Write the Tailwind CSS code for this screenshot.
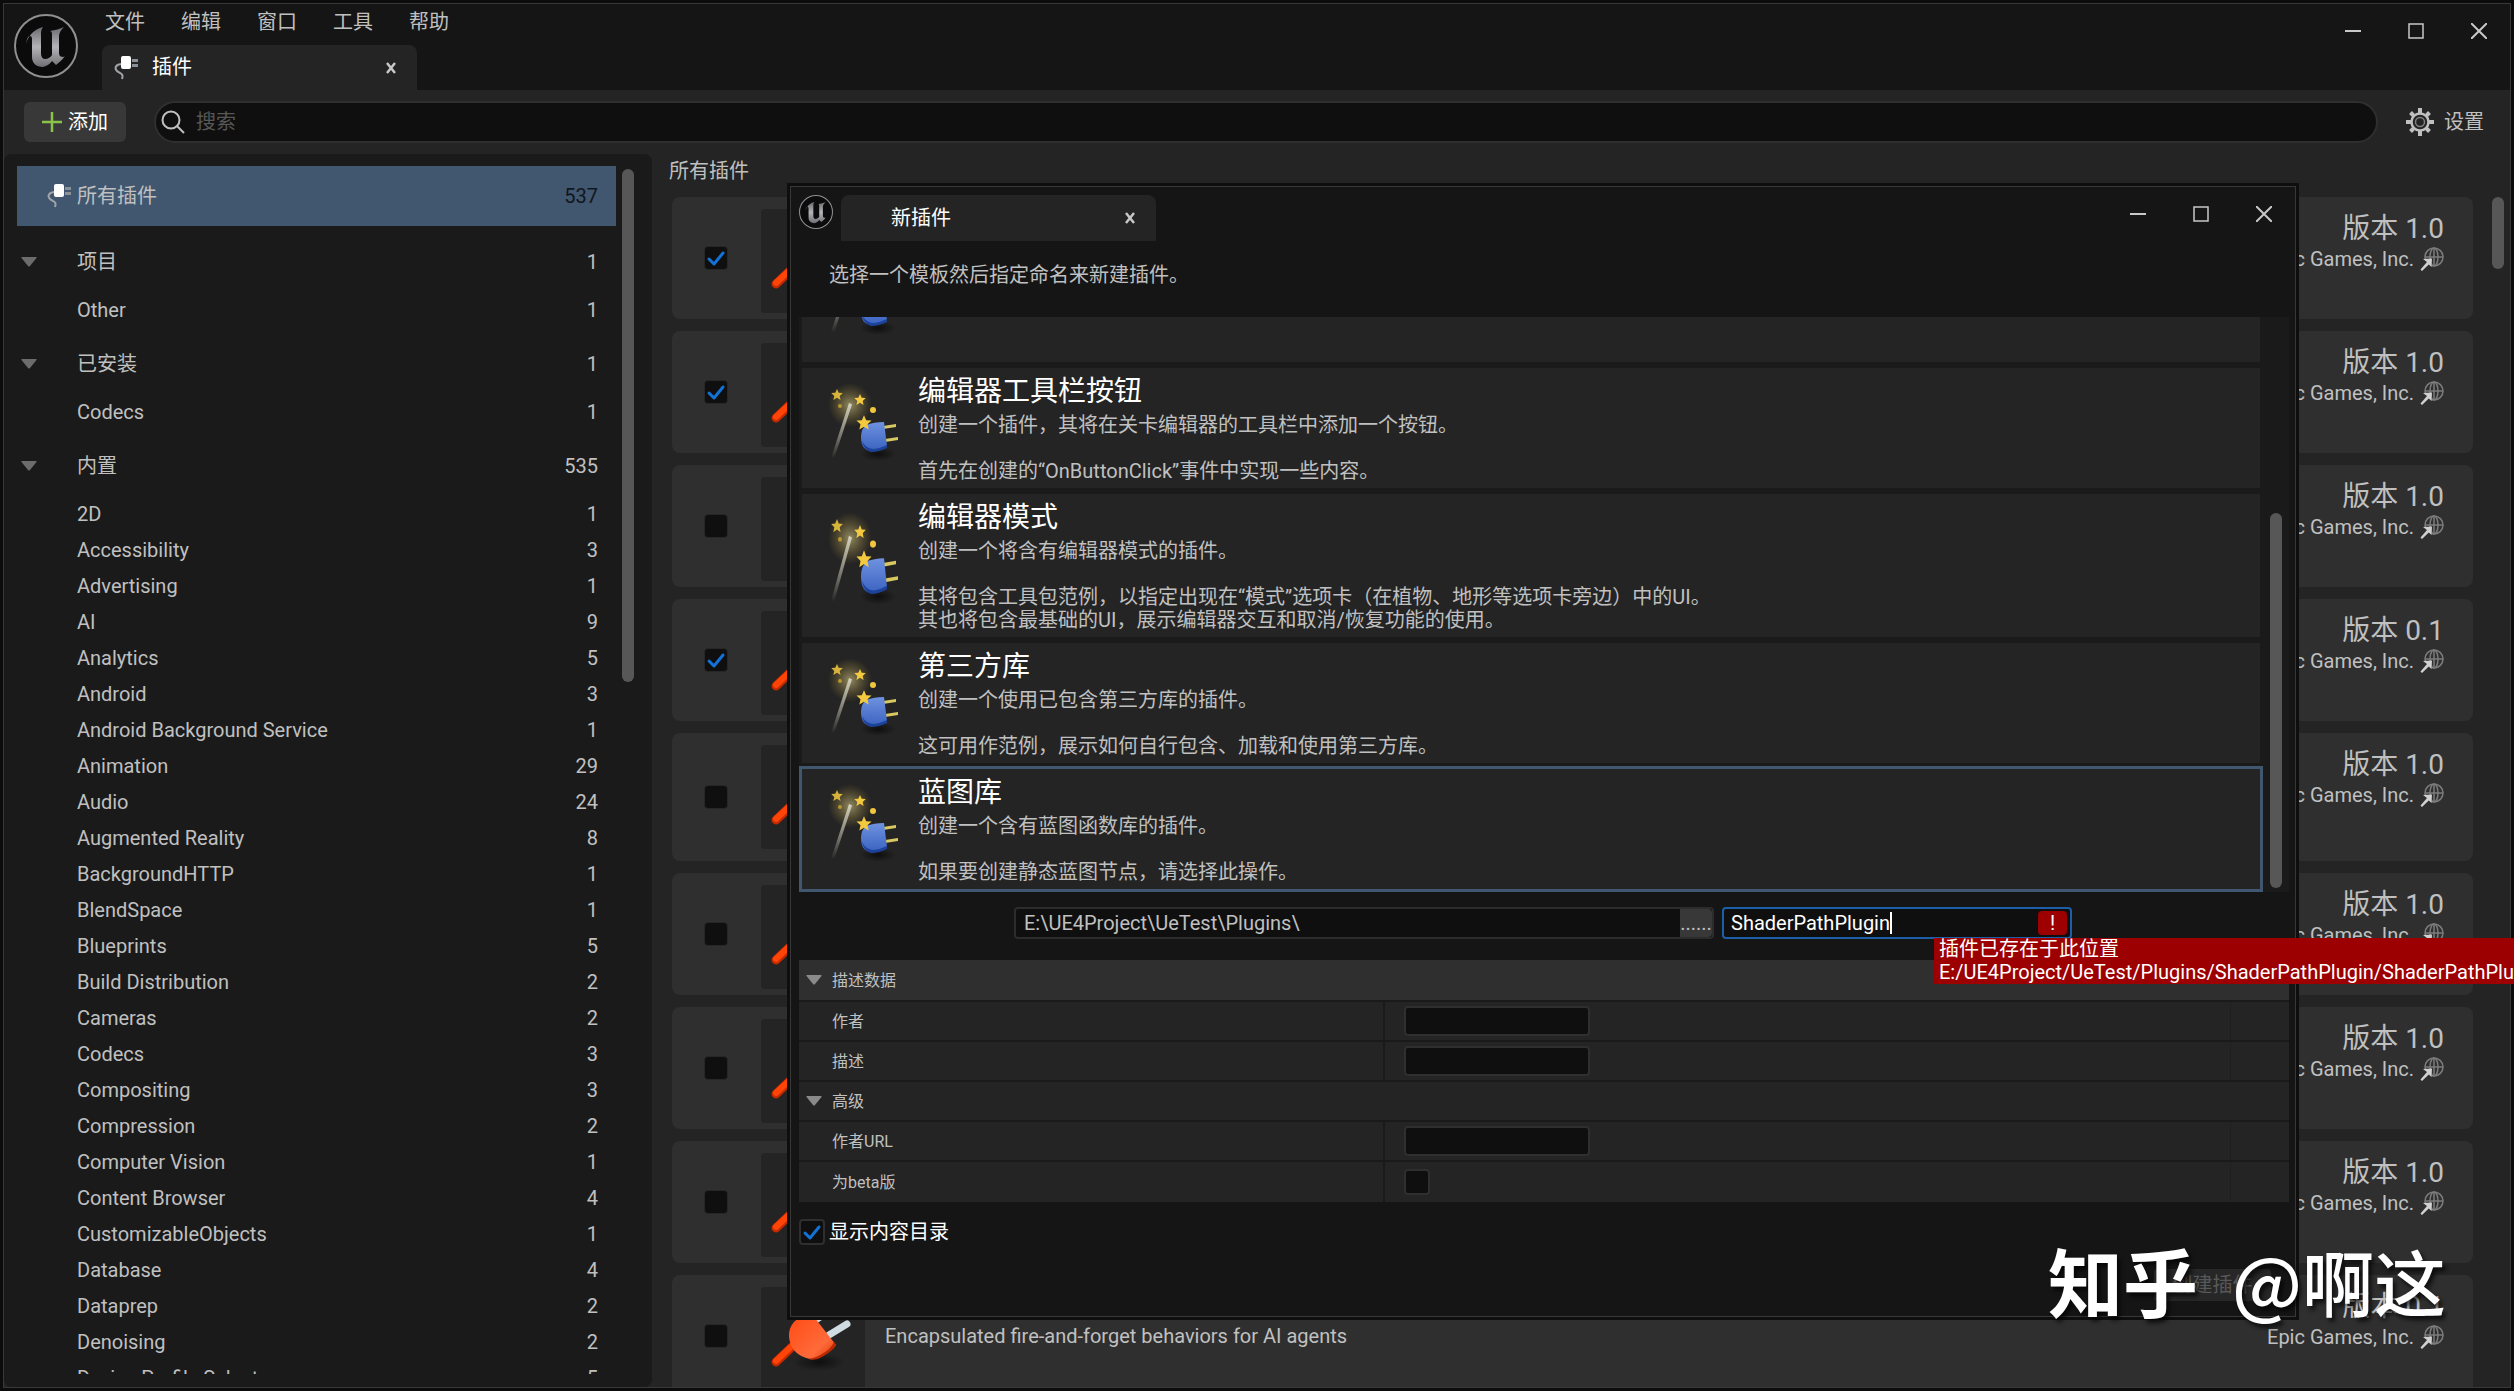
<!DOCTYPE html>
<html lang="zh-CN">
<head>
  <meta charset="UTF-8" />
  <title>插件</title>
  <meta name="viewport" content="width=device-width, initial-scale=1.0" />
  <script src="https://cdn.jsdelivr.net/npm/@tailwindcss/browser@4"></script>
</head>
<body class="relative h-screen overflow-hidden bg-[#0c0c0c] p-[3px] font-['Roboto','Noto_Sans_CJK_SC',sans-serif] text-[20px] leading-[23px] text-[#c0c0c0]">

<!-- icons -->
<svg class="absolute size-0" aria-hidden="true">
  <defs>
    <linearGradient id="steel" x1="0" y1="0" x2="0" y2="1">
      <stop offset="0" stop-color="#6c6c70" /><stop offset=".5" stop-color="#b4b4b8" /><stop offset="1" stop-color="#707074" />
    </linearGradient>
    <linearGradient id="blue" x1="0" y1="0" x2="0" y2="1">
      <stop offset="0" stop-color="#6f92e0" /><stop offset="1" stop-color="#3a62c0" />
    </linearGradient>
    <linearGradient id="stick" x1="0" y1="0" x2="0" y2="1">
      <stop offset="0" stop-color="#d8d3bd" /><stop offset=".6" stop-color="#77756e" /><stop offset="1" stop-color="#222" />
    </linearGradient>
    <linearGradient id="orange" x1="0" y1="0" x2="1" y2="1">
      <stop offset="0" stop-color="#ff4a12" /><stop offset=".7" stop-color="#ff6a3a" /><stop offset="1" stop-color="#d83000" />
    </linearGradient>
    <radialGradient id="glow">
      <stop offset="0" stop-color="#fff2a0" stop-opacity=".5" /><stop offset="1" stop-color="#c8a030" stop-opacity="0" />
    </radialGradient>
    <radialGradient id="shade">
      <stop offset="0" stop-color="#000" stop-opacity=".6" /><stop offset="1" stop-color="#000" stop-opacity="0" />
    </radialGradient>
    <path id="star" d="M0-6 1.700-2.200 5.800-1.900 2.700.900 3.600 5 0 2.800-3.600 5-2.700.900-5.800-1.900-1.700-2.200z" fill="#f3c93f" />
  </defs>
  <symbol id="i-unreal" viewBox="0 0 64 64">
    <circle cx="32" cy="32" r="31" fill="#0b0b0b" stroke="#909090" stroke-width="2" />
    <path fill="url(#steel)" d="M12 30C14 22 20 15 29 13C27 16 27 18 27 20V40c0 3 2 5 4 5c3 0 6-2 7-4V20c0-2-1-3-2-3c5-1 10-2 14-4c-3 3-5 6-5 9v17c0 3 2 4 4 4c1 0 2-1 3-3C50 44 46 48 42 51l-4-4c-2 3-5 5-9 6c-7 0-11-4-11-10V25c0-2-1-3-2-3c-2 0-3 3-4 8z" />
  </symbol>
  <symbol id="i-plug" viewBox="0 0 24 24">
    <path d="M8 8C2 8 0 12 3 15s7 2 5 8" fill="none" stroke="#a0a4a8" stroke-width="2" />
    <rect x="7" y="0" width="10" height="13" rx="2" fill="#fff" />
    <path d="M18 4.500h6M18 9.500h6" stroke="#8a9096" stroke-width="3" />
  </symbol>
  <symbol id="i-check" viewBox="0 0 24 24"><path d="M5 13l5 5 9-11" fill="none" stroke="#1272d6" stroke-width="3" stroke-linecap="round" stroke-linejoin="round" /></symbol>
  <symbol id="i-x" viewBox="0 0 12 12"><path d="M2 1l8 10M10 1L2 11" fill="none" stroke="#c8c8c8" stroke-width="2.500" /></symbol>
  <symbol id="i-min" viewBox="0 0 16 16"><path d="M0 8h16" stroke="#c8c8c8" stroke-width="2" /></symbol>
  <symbol id="i-max" viewBox="0 0 16 16"><rect x="1" y="1" width="14" height="14" fill="none" stroke="#c8c8c8" stroke-width="1.500" /></symbol>
  <symbol id="i-close" viewBox="0 0 16 16"><path d="M0 0l16 16M16 0L0 16" stroke="#c8c8c8" stroke-width="2" /></symbol>
  <symbol id="i-tri" viewBox="0 0 16 10"><path d="M1 0h14q1 0 .5 1L9 9q-1 1-2 0L.5 1Q0 0 1 0z" fill="currentColor" /></symbol>
  <symbol id="i-globe" viewBox="0 0 24 24">
    <g fill="none" stroke="#7c7c7c" stroke-width="1.500"><circle cx="14" cy="10" r="9" /><ellipse cx="14" cy="10" rx="4" ry="9" /><path d="M5 10h18M14 1v18" /></g>
    <path d="M0 13l12-1-1 12-3-4-6 5-2-2 5-6z" fill="#2f2f2f" /><path d="M3 12l9-.5L11.500 20l-2.700-2.500L2 24l-1.500-1.500L7 15z" fill="#d0d0d0" />
  </symbol>
  <symbol id="i-wand" viewBox="0 0 84 120">
    <circle cx="32" cy="37" r="22" fill="url(#glow)" />
    <ellipse cx="60" cy="86" rx="18" ry="7" fill="url(#shade)" />
    <path d="M31 35l3 1.500L16 91l-3-1z" fill="url(#stick)" />
    <use href="#star" x="19" y="27" opacity=".85" /><use href="#star" x="42" y="32" /><circle cx="22" cy="38" r="2" fill="#b8952f" /><circle cx="55" cy="42" r="3" fill="#f0c63e" />
    <path d="M65 58l13-2v3l-13 2zM67 71l13-2v3l-13 2z" fill="#d8c860" />
    <path d="M48 57q8-3 18-3l3 24q-5 4-13 5-13 1-13-14 0-8 5-12z" fill="url(#blue)" />
    <path d="M44 73q4 8 12 8 7-1 13-4v3q-8 4-16 4-7-2-9-11z" fill="#1d429a" />
    <use href="#star" transform="translate(46 55) scale(1.300)" />
  </symbol>
  <symbol id="i-redplug" viewBox="0 0 104 104">
    <ellipse cx="58" cy="75" rx="26" ry="9" fill="url(#shade)" />
    <path d="M15 75l18-17" stroke="#c42a00" stroke-width="9" stroke-linecap="round" />
    <path d="M15 74l18-17" stroke="#ff4408" stroke-width="6" stroke-linecap="round" />
    <path d="M68 48L86 37M56 32l16-11" stroke="#cfdde2" stroke-width="7" stroke-linecap="round" />
    <path d="M50 26l25 32q-2 4-14 11-6 4-12 3-19-4-21-22-1-18 22-24z" fill="url(#orange)" />
    <path d="M75 58q-2 5-14 12-6 4-14 2 8-1 14-5 9-5 12-12z" fill="#b92a00" />
  </symbol>
</svg>

<div class="flex h-full flex-col border border-[#383838] bg-[#242424]">
  <header class="flex h-[86px] shrink-0 bg-[#151515]">
    <svg class="mt-[10px] ml-[10px] size-16"><use href="#i-unreal" /></svg>
    <div class="ml-6 flex-1">
      <nav class="flex h-9 items-center gap-9 pl-[3px]">
        <a href="#">文件</a><a href="#">编辑</a><a href="#">窗口</a><a href="#">工具</a><a href="#">帮助</a>
      </nav>
      <div class="mt-[5px] flex h-[45px] w-[315px] items-center rounded-t-lg bg-[#242424] pr-5 pl-3">
        <svg class="mr-[14px] size-6"><use href="#i-plug" /></svg>
        <h1 class="text-white">插件</h1>
        <button class="ml-auto" aria-label="关闭标签"><svg class="size-3"><use href="#i-x" /></svg></button>
      </div>
    </div>
    <div class="flex h-[54px]">
      <button class="flex w-[63px] items-center justify-center" aria-label="最小化"><svg class="size-4"><use href="#i-min" /></svg></button>
      <button class="flex w-[63px] items-center justify-center" aria-label="最大化"><svg class="size-4"><use href="#i-max" /></svg></button>
      <button class="flex w-[63px] items-center justify-center" aria-label="关闭"><svg class="size-4"><use href="#i-close" /></svg></button>
    </div>
  </header>

  <div class="flex h-16 shrink-0 items-center pr-[26px] pl-5">
    <button class="flex h-10 w-[102px] items-center justify-center gap-[6px] rounded-md bg-[#383838] text-white">
      <svg class="size-5" viewBox="0 0 20 20"><path d="M10 0v20M0 10h20" stroke="#8bc24a" stroke-width="2.500" /></svg>添加
    </button>
    <label class="ml-7 flex h-[42px] flex-1 items-center rounded-full border-2 border-[#2f2f2f] bg-[#0f0f0f] pl-[5px]">
      <svg class="size-6" viewBox="0 0 24 24" fill="none" stroke="#c0c0c0" stroke-width="2"><circle cx="10" cy="10" r="8.500" /><path d="M16 16l7 7" /></svg>
      <input type="search" placeholder="搜索" aria-label="搜索" class="ml-[11px] flex-1 bg-transparent outline-none placeholder:text-[#575757]" />
    </label>
    <button class="ml-7 flex items-center gap-[10px]">
      <svg class="size-7" viewBox="0 0 28 28"><g stroke="#c0c0c0" stroke-width="4"><path d="M14 0v5M14 23v5M0 14h5M23 14h5M4.500 4.500l3 3M20.500 20.500l3 3M4.500 23.500l3-3M20.500 7.500l3-3" /></g><circle cx="14" cy="14" r="8.500" fill="none" stroke="#c0c0c0" stroke-width="2.500" /><circle cx="14" cy="14" r="4.500" fill="none" stroke="#808080" stroke-width="1.500" /></svg>
      设置
    </button>
  </div>

  <div class="flex min-h-0 flex-1">
    <aside class="flex w-[648px] shrink-0 rounded-lg bg-[#1a1a1a] pt-3 pb-[13px] pl-[13px]">
      <div id="categories" class="w-[599px] overflow-hidden">
        <a href="#" class="flex h-[60px] items-center bg-[#40576f] pr-[18px] pl-[30px]">
          <svg class="mr-[6px] size-6"><use href="#i-plug" /></svg>所有插件<span class="ml-auto text-[#10161d]">537</span>
        </a>
      </div>
      <div class="mt-[3px] ml-[6px] h-[513px] w-3 rounded-full bg-[#575757]"></div>
    </aside>

    <main class="flex min-w-0 flex-1 flex-col pr-[6px] pl-[17px]">
      <h2 class="mb-[9px] flex h-[34px] shrink-0 items-center">所有插件</h2>
      <div class="flex min-h-0 flex-1">
        <div id="plugins" class="ml-[3px] flex flex-1 flex-col gap-3 overflow-hidden"></div>
        <div class="ml-[19px] h-[72px] w-3 rounded-full bg-[#575757]"></div>
      </div>
    </main>
  </div>
</div>

<!-- new plugin window -->
<section class="absolute top-[183px] right-[215px] bottom-[71px] left-[787px] border-[3px] border-[#0e0e0e]">
  <div class="flex h-full flex-col border border-[#383838] bg-[#151515]">
    <header class="flex h-[54px] shrink-0">
      <svg class="mt-2 ml-2 size-[34px]"><use href="#i-unreal" /></svg>
      <div class="mt-2 ml-2 flex w-[315px] items-center rounded-t-lg bg-[#242424] pr-5 pl-[50px]">
        <h2 class="text-white">新插件</h2>
        <button class="ml-auto" aria-label="关闭标签"><svg class="size-3"><use href="#i-x" /></svg></button>
      </div>
      <div class="ml-auto flex">
        <button class="flex w-[63px] items-center justify-center" aria-label="最小化"><svg class="size-4"><use href="#i-min" /></svg></button>
        <button class="flex w-[63px] items-center justify-center" aria-label="最大化"><svg class="size-4"><use href="#i-max" /></svg></button>
        <button class="flex w-[63px] items-center justify-center" aria-label="关闭"><svg class="size-4"><use href="#i-close" /></svg></button>
      </div>
    </header>
    <p class="mb-2 flex h-[68px] shrink-0 items-center pl-[38px]">选择一个模板然后指定命名来新建插件。</p>

    <div class="mr-[6px] ml-2 flex min-h-0 flex-1 bg-[#1a1a1a]">
      <div id="templates" class="flex flex-1 flex-col justify-end overflow-hidden"></div>
      <div class="mr-[7px] mb-1 ml-[7px] h-[375px] w-3 self-end rounded-full bg-[#575757]"></div>
    </div>

    <div class="mt-[15px] flex h-8 shrink-0 gap-2 pl-[223px]">
      <div class="flex w-[700px] rounded border-2 border-[#2c2c2c] bg-[#0f0f0f]">
        <input type="text" value="E:\UE4Project\UeTest\Plugins\" aria-label="路径" class="min-w-0 flex-1 px-2 outline-none" />
        <button class="w-8 rounded-r bg-[#383838]">......</button>
      </div>
      <div class="relative flex w-[350px] items-center rounded border-2 border-[#1c5fa8] bg-[#0f0f0f] pr-[3px] pl-[7px] text-white">
        <label class="flex flex-1 items-center"><input type="text" value="ShaderPathPlugin" aria-label="名称" class="field-sizing-content outline-none" /><span class="h-[22px] w-[2px] bg-white"></span></label>
        <span class="flex h-6 w-[29px] items-center justify-center rounded bg-[#9c0000]">!</span>
        <p class="absolute top-[29px] left-[210px] z-10 w-max bg-[#9c0000] px-[5px] text-white">插件已存在于此位置<br />E:/UE4Project/UeTest/Plugins/ShaderPathPlugin/ShaderPathPlugin.uplugin</p>
      </div>
    </div>

    <div class="mt-[21px] mr-[6px] ml-2 shrink-0 bg-[#242424] text-[16px]">
      <button class="flex h-[42px] w-full items-center gap-[10px] border-b-2 border-[#1a1a1a] bg-[#2f2f2f] pl-[7px]"><svg class="h-[10px] w-4 text-[#8a8a8a]"><use href="#i-tri" /></svg>描述数据</button>
      <div class="flex h-10 items-stretch border-b-2 border-[#1a1a1a]">
        <label for="author" class="flex w-[586px] items-center border-r-2 border-[#1a1a1a] pl-[33px]">作者</label>
        <div class="flex flex-1 items-center border-r border-[#1f1f1f] pl-[19px]"><input id="author" type="text" class="h-[30px] w-[186px] rounded border-2 border-[#2f2f2f] bg-[#0f0f0f]" /></div>
        <div class="w-[58px]"></div>
      </div>
      <div class="flex h-10 items-stretch border-b-2 border-[#1a1a1a]">
        <label for="desc" class="flex w-[586px] items-center border-r-2 border-[#1a1a1a] pl-[33px]">描述</label>
        <div class="flex flex-1 items-center border-r border-[#1f1f1f] pl-[19px]"><input id="desc" type="text" class="h-[30px] w-[186px] rounded border-2 border-[#2f2f2f] bg-[#0f0f0f]" /></div>
        <div class="w-[58px]"></div>
      </div>
      <button class="flex h-10 w-full items-center gap-[10px] border-b-2 border-[#1a1a1a] pl-[7px]"><svg class="h-[10px] w-4 text-[#8a8a8a]"><use href="#i-tri" /></svg>高级</button>
      <div class="flex h-10 items-stretch border-b-2 border-[#1a1a1a]">
        <label for="url" class="flex w-[586px] items-center border-r-2 border-[#1a1a1a] pl-[33px]">作者URL</label>
        <div class="flex flex-1 items-center border-r border-[#1f1f1f] pl-[19px]"><input id="url" type="text" class="h-[30px] w-[186px] rounded border-2 border-[#2f2f2f] bg-[#0f0f0f]" /></div>
        <div class="w-[58px]"></div>
      </div>
      <div class="flex h-10 items-stretch">
        <label for="beta" class="flex w-[586px] items-center border-r-2 border-[#1a1a1a] pl-[33px]">为beta版</label>
        <div class="flex flex-1 items-center border-r border-[#1f1f1f] pl-[19px]"><input id="beta" type="checkbox" class="size-[26px] appearance-none rounded border-2 border-[#2f2f2f] bg-[#0f0f0f]" /></div>
        <div class="w-[58px]"></div>
      </div>
    </div>

    <label class="mt-[17px] ml-2 flex shrink-0 items-center gap-1 text-white">
      <span class="grid">
        <input type="checkbox" checked class="peer col-start-1 row-start-1 size-[26px] appearance-none rounded border-2 border-[#2f2f2f] bg-[#0f0f0f]" />
        <svg class="pointer-events-none col-start-1 row-start-1 hidden size-6 place-self-center peer-checked:block"><use href="#i-check" /></svg>
      </span>
      显示内容目录
    </label>
    <button disabled class="mt-6 mr-6 mb-[15px] h-8 w-[117px] shrink-0 self-end rounded bg-[#272727] text-[#585858]">创建插件</button>
  </div>
</section>

<p class="absolute right-[68px] bottom-[75px] z-20 flex items-center gap-[34px] font-['Noto_Sans_CJK_SC',sans-serif] text-[72px] leading-[72px] font-medium text-white text-shadow-[3px_4px_4px_#000000b0]"><b class="text-[75px]">知乎</b>@啊这</p>

<script>
  const categories = [
    ['项目', 1, [['Other', 1]]],
    ['已安装', 1, [['Codecs', 1]]],
    ['内置', 535, [['2D', 1], ['Accessibility', 3], ['Advertising', 1], ['AI', 9], ['Analytics', 5], ['Android', 3],
      ['Android Background Service', 1], ['Animation', 29], ['Audio', 24], ['Augmented Reality', 8], ['BackgroundHTTP', 1],
      ['BlendSpace', 1], ['Blueprints', 5], ['Build Distribution', 2], ['Cameras', 2], ['Codecs', 3], ['Compositing', 3],
      ['Compression', 2], ['Computer Vision', 1], ['Content Browser', 4], ['CustomizableObjects', 1], ['Database', 4],
      ['Dataprep', 2], ['Denoising', 2], ['Device Profile Selectors', 5]]],
  ];
  document.getElementById('categories').insertAdjacentHTML('beforeend', categories.map(([name, count, items]) => `
    <div class="mt-[6px]">
      <button class="flex h-[60px] w-full items-center pr-[18px] pl-1"><svg class="mr-10 h-[10px] w-4 text-[#6c6c6c]"><use href="#i-tri" /></svg>${name}<span class="ml-auto">${count}</span></button>
      ${items.map(([n, c]) => `<a href="#" class="flex h-9 items-center pr-[18px] pl-[60px]">${n}<span class="ml-auto">${c}</span></a>`).join('')}
    </div>`).join(''));

  // enabled, icon, version, card height, description
  const plugins = [
    [true, 'redplug', '1.0', 'h-[122px]', ''],
    [true, 'redplug', '1.0', 'h-[122px]', ''],
    [false, 'wand', '1.0', 'h-[122px]', ''],
    [true, 'redplug', '0.1', 'h-[122px]', ''],
    [false, 'redplug', '1.0', 'h-[128px]', ''],
    [false, 'redplug', '1.0', 'h-[122px]', ''],
    [false, 'redplug', '1.0', 'h-[122px]', ''],
    [false, 'redplug', '1.0', 'h-[122px]', ''],
    [false, 'redplug', '0.1', 'h-[122px]', 'Encapsulated fire-and-forget behaviors for AI agents'],
  ];
  document.getElementById('plugins').innerHTML = plugins.map(([on, icon, version, height, desc]) => `
    <article class="flex shrink-0 rounded-lg bg-[#2f2f2f] pr-[29px] pl-8 ${height}">
      <label class="mr-[33px] grid self-center">
        <input type="checkbox" aria-label="启用" ${on ? 'checked' : ''} class="peer col-start-1 row-start-1 size-6 appearance-none rounded border border-[#272727] bg-[#0f0f0f]" />
        <svg class="pointer-events-none col-start-1 row-start-1 hidden size-6 peer-checked:block"><use href="#i-check" /></svg>
      </label>
      <div class="mt-3 size-[104px] rounded bg-[#242424]"><svg class="size-full"><use href="#i-${icon}" /></svg></div>
      <p class="mt-[50px] ml-5">${desc}</p>
      <div class="mt-[17px] ml-auto text-right">
        <div class="mb-[3px] text-[28px] leading-[30px]">版本 ${version}</div>
        <a href="#" class="flex items-center justify-end gap-[6px]">Epic Games, Inc.<svg class="size-6"><use href="#i-globe" /></svg></a>
      </div>
    </article>`).join('');

  const templates = [
    ['&nbsp;', ['&nbsp;', '&nbsp;', '&nbsp;']],
    ['编辑器工具栏按钮', ['创建一个插件，其将在关卡编辑器的工具栏中添加一个按钮。', '&nbsp;', '首先在创建的“OnButtonClick”事件中实现一些内容。']],
    ['编辑器模式', ['创建一个将含有编辑器模式的插件。', '&nbsp;', '其将包含工具包范例，以指定出现在“模式”选项卡（在植物、地形等选项卡旁边）中的UI。', '其也将包含最基础的UI，展示编辑器交互和取消/恢复功能的使用。']],
    ['第三方库', ['创建一个使用已包含第三方库的插件。', '&nbsp;', '这可用作范例，展示如何自行包含、加载和使用第三方库。']],
    ['蓝图库', ['创建一个含有蓝图函数库的插件。', '&nbsp;', '如果要创建静态蓝图节点，请选择此操作。']],
  ];
  document.getElementById('templates').innerHTML = templates.map(([title, lines], i) => `
    <article class="flex shrink-0 border-[3px] bg-[#242424] ${i === 4 ? 'border-[#40576f]' : 'border-[#1a1a1a]'}">
      <svg class="mr-4 ml-4 w-[84px] self-stretch" viewBox="0 0 84 120" preserveAspectRatio="none"><use href="#i-wand" width="84" height="120" /></svg>
      <div class="pt-[7px] pb-[5px]">
        <h3 class="mb-[5px] text-[28px] leading-[34px] text-white">${title}</h3>
        ${lines.map(l => `<p>${l}</p>`).join('')}
      </div>
    </article>`).join('');
</script>
</body>
</html>
